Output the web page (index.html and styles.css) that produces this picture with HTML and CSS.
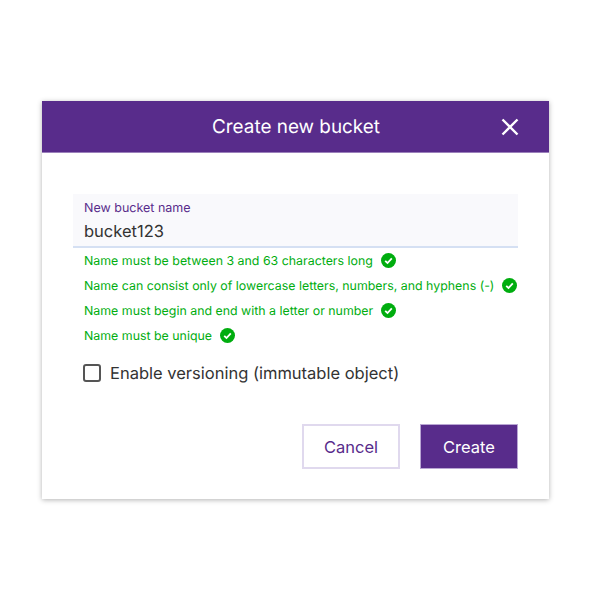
FILE: index.html
```html
<html>

<head>
    <title>Create new bucket</title>
    <link rel="stylesheet" href="styles.css">
</head>

<body class="body">
    <div class="dialog">
        <div class="dialogHeader">
            <span class="dialogTitle">Create new bucket</span>
            <svg class="closeIcon" width="18" height="18" viewBox="0 0 18 18">
                <path d="M1.5 1.5 L16.5 16.5 M16.5 1.5 L1.5 16.5" stroke="#fff" stroke-width="2.4" fill="none" />
            </svg>
        </div>
        <div class="dialogBody">
            <div class="nameField">
                <label class="nameLabel">New bucket name</label>
                <div class="nameValue">bucket123</div>
            </div>
            <ul class="rules">
                <li class="rule">Name must be between 3 and 63 characters long
                    <svg class="ruleIcon" width="15" height="15" viewBox="0 0 15 15">
                        <circle cx="7.5" cy="7.5" r="7.5" fill="#00ad0f" />
                        <path d="M4.2 7.8 L6.5 10 L10.8 5.4" stroke="#fff" stroke-width="1.8" fill="none" />
                    </svg>
                </li>
                <li class="rule">Name can consist only of lowercase letters, numbers, and hyphens (-)
                    <svg class="ruleIcon" width="15" height="15" viewBox="0 0 15 15">
                        <circle cx="7.5" cy="7.5" r="7.5" fill="#00ad0f" />
                        <path d="M4.2 7.8 L6.5 10 L10.8 5.4" stroke="#fff" stroke-width="1.8" fill="none" />
                    </svg>
                </li>
                <li class="rule">Name must begin and end with a letter or number
                    <svg class="ruleIcon" width="15" height="15" viewBox="0 0 15 15">
                        <circle cx="7.5" cy="7.5" r="7.5" fill="#00ad0f" />
                        <path d="M4.2 7.8 L6.5 10 L10.8 5.4" stroke="#fff" stroke-width="1.8" fill="none" />
                    </svg>
                </li>
                <li class="rule">Name must be unique
                    <svg class="ruleIcon" width="15" height="15" viewBox="0 0 15 15">
                        <circle cx="7.5" cy="7.5" r="7.5" fill="#00ad0f" />
                        <path d="M4.2 7.8 L6.5 10 L10.8 5.4" stroke="#fff" stroke-width="1.8" fill="none" />
                    </svg>
                </li>
            </ul>
            <div class="versioning">
                <span class="checkBox"></span>
                <span class="versioningText">Enable versioning (immutable object)</span>
            </div>
            <div class="actions">
                <button class="cancelButton">Cancel</button>
                <button class="createButton">Create</button>
            </div>
        </div>
    </div>
</body>

</html>
```

FILE: styles.css
```css
* {
    box-sizing: border-box;
}

.body {
    margin: 0;
    width: 592px;
    height: 600px;
    padding: 101px 43px 0 42px;
    background-color: #fff;
    font-family: Inter, "Liberation Sans", sans-serif;
    text-rendering: geometricPrecision;
}

.dialog {
    width: 507px;
    height: 398px;
    background-color: #fff;
    box-shadow: 0 1px 5px rgba(0, 0, 0, 0.3);
}

.dialogHeader {
    height: 52px;
    display: flex;
    align-items: center;
    justify-content: space-between;
    padding: 0 30px 0 170px;
    background-color: #582c8b;
    border-bottom: 1px solid #9b80bb;
}

.dialogTitle {
    font-size: 18.9px;
    color: #fff;
}

.dialogBody {
    padding: 41px 31px 0;
}

.nameField {
    height: 54px;
    padding: 7px 11px 0;
    background-color: #f9f9fc;
    border-bottom: 2px solid #d5e0f3;
}

.nameLabel {
    display: block;
    font-size: 12.5px;
    line-height: 16px;
    color: #582c8b;
}

.nameValue {
    margin-top: 4px;
    font-size: 16.5px;
    line-height: 20px;
    color: #333;
}

.rules {
    list-style: none;
    margin: 0;
    padding: 0 0 0 11px;
}

.rule {
    height: 25px;
    display: flex;
    align-items: center;
    gap: 8px;
    font-size: 12.38px;
    white-space: nowrap;
    color: #00ad0f;
}

.versioning {
    display: flex;
    align-items: center;
    gap: 9px;
    margin-top: 15px;
    padding-left: 10px;
}

.checkBox {
    width: 18px;
    height: 18px;
    border: 2px solid #555;
    border-radius: 3px;
}

.versioningText {
    font-size: 16.5px;
    color: #333;
}

.actions {
    display: flex;
    justify-content: flex-end;
    gap: 20px;
    margin-top: 41px;
}

.cancelButton,
.createButton {
    width: 98px;
    height: 45px;
    font-family: inherit;
    font-size: 16.5px;
}

.cancelButton {
    background-color: #fff;
    border: 2px solid #e0d9ee;
    color: #582c8b;
}

.createButton {
    background-color: #582c8b;
    border: 1px solid #b9a6d3;
    color: #fff;
}
```
